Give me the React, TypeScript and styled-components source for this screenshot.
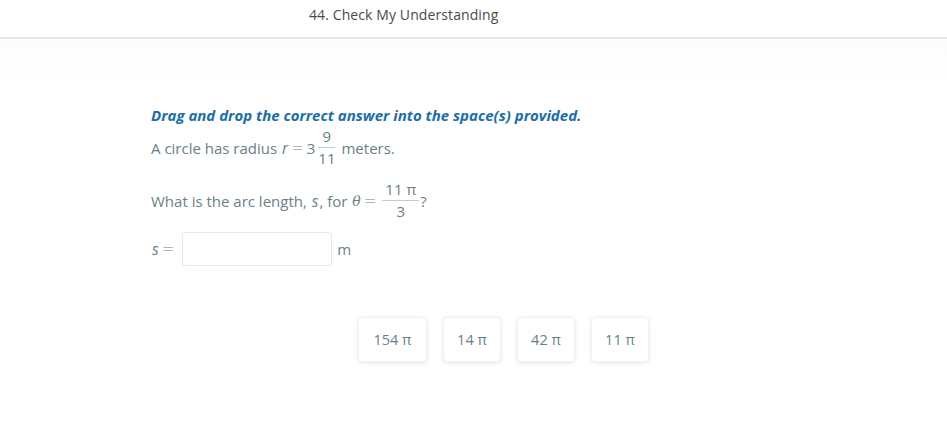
import React from "react";
import styled, { createGlobalStyle } from "styled-components";

const Global = createGlobalStyle`
  html, body { margin: 0; padding: 0; background: #fff; }
  body { font-family: "Open Sans", "Noto Sans", sans-serif; }
`;

const Header = styled.header`
  height: 39px;
  border-bottom: 2px solid #e8e8e8;
  padding: 5px 0 0 309px;
  box-sizing: border-box;
`;

const Title = styled.h1`
  margin: 0;
  font-size: 14px;
  line-height: 20px;
  font-weight: 400;
  color: #4a4a4a;
  letter-spacing: 0.1px;
`;

const Main = styled.main`
  padding: 66px 0 0 151px;
  background: linear-gradient(#fbfcfc, #fff 50px);
  min-height: 409px;
  box-sizing: border-box;
`;

const Instruction = styled.p`
  margin: 0;
  font-size: 15px;
  line-height: 20px;
  font-weight: 700;
  font-style: italic;
  color: #1d6ea5;
`;

const Line = styled.div<{ $mt: number }>`
  display: flex;
  align-items: center;
  margin-top: ${(p) => p.$mt}px;
  font-size: 15px;
  line-height: 20px;
  color: #6a7f88;
  white-space: pre;
`;

const Var = styled.span<{ $serif?: boolean }>`
  font-family: ${(p) => (p.$serif ? '"DejaVu Serif", serif' : '"Open Sans", sans-serif')};
  font-style: italic;
  font-size: ${(p) => (p.$serif ? 14 : 15.5)}px;
  margin: 0 1px;
`;

const Eq = styled.span`
  font-family: "DejaVu Sans", sans-serif;
  font-weight: 300;
  margin: 0 3px 0 2px;
  font-size: 15px;
`;

const Frac = styled.span<{ $after: number }>`
  display: inline-flex;
  flex-direction: column;
  align-items: center;
  font-size: 15px;
  line-height: 19px;
  margin: 0 ${(p) => p.$after}px 0 3px;
`;

const Num = styled.span`
  padding: 0 3px 1px;
  border-bottom: 1px solid #c3ccce;
  align-self: stretch;
  text-align: center;
`;

const Den = styled.span`
  padding-top: 1px;
`;

const AnswerRow = styled.div`
  display: flex;
  align-items: center;
  margin-top: 11px;
  font-size: 15px;
  color: #6a7f88;
`;

const Drop = styled.div`
  width: 150px;
  height: 34px;
  box-sizing: border-box;
  border: 1px solid #e6e8e8;
  border-radius: 3px;
  margin: 0 5px 0 5px;
  background: #fff;
`;

const Tiles = styled.div`
  display: flex;
  gap: 16px;
  margin: 51px 0 0 207px;
`;

const Tile = styled.div<{ $w: number }>`
  width: ${(p) => p.$w}px;
  height: 45px;
  box-sizing: border-box;
  display: flex;
  align-items: center;
  justify-content: center;
  background: #fff;
  border: 1px solid #f0f1f1;
  border-radius: 4px;
  box-shadow: 0 1px 4px rgba(0, 0, 0, 0.1);
  font-size: 14.5px;
  color: #6a7f88;
`;

const tiles = [
  { label: "154 π", w: 69 },
  { label: "14 π", w: 58 },
  { label: "42 π", w: 58 },
  { label: "11 π", w: 58 },
];

export default function App() {
  return (
    <>
      <Global />
      <Header>
        <Title>44. Check My Understanding</Title>
      </Header>
      <Main>
        <Instruction>Drag and drop the correct answer into the space(s) provided.</Instruction>
        <Line $mt={2}>
          A circle has radius <Var>r</Var>
          <Eq>=</Eq>3
          <Frac $after={6}>
            <Num>9</Num>
            <Den>11</Den>
          </Frac>
          meters.
        </Line>
        <Line $mt={12}>
          What is the arc length, <Var>s</Var>, for <Var $serif>θ</Var>
          <Eq>=</Eq>
          <Frac $after={1}>
            <Num>11 π</Num>
            <Den>3</Den>
          </Frac>
          ?
        </Line>
        <AnswerRow>
          <Var>s</Var>
          <Eq>=</Eq>
          <Drop />m
        </AnswerRow>
        <Tiles>
          {tiles.map((t) => (
            <Tile key={t.label} $w={t.w}>
              {t.label}
            </Tile>
          ))}
        </Tiles>
      </Main>
    </>
  );
}
